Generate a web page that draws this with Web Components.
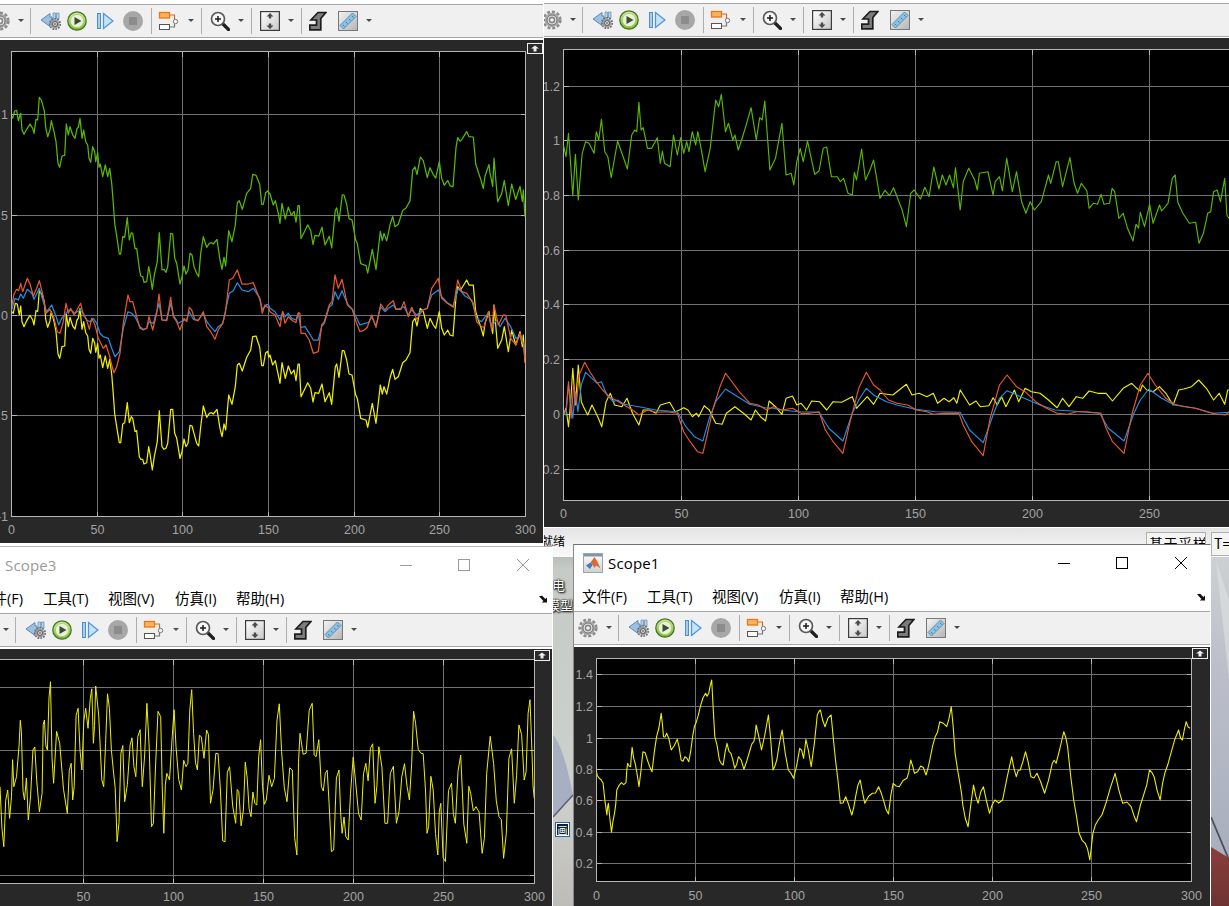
<!DOCTYPE html>
<html lang="zh"><head><meta charset="utf-8"><title>Scopes</title>
<style>
html,body{margin:0;padding:0;width:1229px;height:906px;overflow:hidden;background:#c5c8c5}
</style></head>
<body>
<desk-top>
  <scope-window id="b" style="left:540px;top:0;width:700px;height:557px;--head:3px;--gap:1px">
    <scope-toolbar c="11"></scope-toolbar>
    <scope-plot key="B"></scope-plot>
    <scope-status></scope-status>
  </scope-window>
  <scope-window id="a" style="left:-20px;top:0;width:564px;height:546px;--head:4px;--gap:2px">
    <scope-toolbar c="19"></scope-toolbar>
    <scope-plot key="A"></scope-plot>
  </scope-window>
  <scope-window id="c" style="left:-30px;top:546px;width:583px;height:366px;--gap:2px;--top-w:1px;--top-edge:#b4b4b4;--left-edge:#b4b4b4">
    <scope-title name="Scope3" inactive></scope-title>
    <scope-menu pad="7"></scope-menu>
    <scope-toolbar c="14"></scope-toolbar>
    <scope-plot key="C"></scope-plot>
  </scope-window>
  <scope-window id="d" style="left:573px;top:544px;width:638px;height:366px;--gap:2px;--top-w:1px;--top-edge:#707070;--left-edge:#8a8a8a">
    <scope-title name="Scope1"></scope-title>
    <scope-menu pad="8"></scope-menu>
    <scope-toolbar c="14"></scope-toolbar>
    <scope-plot key="D"></scope-plot>
  </scope-window>
</desk-top>
<script>
const P=(s,ox,sx,oy,sy)=>s.trim().split(/\s+/).map(t=>{const [a,b]=t.split(',').map(Number);return [ox+a/sx,oy+b/sy]});
const Y1="35,125 40,130 46,100 52,102 58,135 62,108 66,155 72,170 80,152 90,136 98,150 102,165 108,122 113,124 118,62 124,70 133,95 137,148 143,172 150,152 154,125 162,155 168,185 174,252 179,265 186,230 194,228 199,132 205,170 210,142 218,168 225,177 231,150 235,145 240,115 246,178 251,155 257,188 263,198 267,238 272,250 278,205 284,220 287,247 293,220 297,265 301,255 308,293 316,258 323,295 329,268 335,312 340,372 344,432 352,482 358,518 362,518 368,462 374,458 382,398 388,458 394,440 398,445 405,484 410,482 418,560 422,568 428,568 432,582 440,578 446,530 450,552 457,600 463,560 472,515 478,422 486,530 492,538 498,535 503,520 512,418 518,418 524,490 530,505 540,565 546,545 552,507 558,530 564,520 570,466 576,468 582,490 590,520 596,528 602,470 610,408 620,442 628,430 635,428 640,432 651,418 660,475 666,500 672,462 677,480 686,375 696,403 706,350 712,285 718,280 727,303 740,262 752,240 758,200 768,198 779,232 785,287 790,287 797,248 803,244 806,262";
const Y2="0,255 8,285 16,272 30,340 36,278 46,325 55,288 64,312 72,300 78,332 84,282 88,282 93,380 103,360 113,338 122,355 129,396 135,368 146,370 156,342 165,395 178,368 185,403 196,290 200,282 207,322 217,242 222,242 230,270 237,312 246,315 257,375 262,385 272,445 288,450 293,472 307,400 318,460 331,345 337,372 342,350 350,372 361,320 368,298 375,328 385,320 398,278 408,270 420,248 428,155 435,145 441,168 451,115 460,125 472,175 480,145 490,165 497,175 508,125 515,175 523,195 533,180 540,195 549,198 558,80 563,50 570,60 575,55 590,30 597,45 610,45 617,125 625,150 632,170 640,198 645,160 657,125 660,150 668,190 672,105 683,235 695,210 703,170 715,245 725,180 737,225 750,185 757,230 760,195 765,275";
const G1="35,200 38,204 44,183 50,181 55,212 62,190 66,240 72,253 80,238 90,222 98,235 102,250 108,208 113,210 118,142 124,150 133,182 137,232 143,260 150,240 154,212 162,245 168,275 174,340 179,352 186,318 194,316 199,222 205,255 210,230 218,255 225,265 231,236 235,232 240,205 246,265 251,240 257,275 263,285 267,325 272,337 278,290 284,305 287,335 293,308 297,352 301,342 308,380 316,345 323,380 329,355 335,400 340,460 344,520 352,570 358,612 362,612 368,560 374,562 382,503 388,570 394,548 398,550 405,596 410,595 418,655 422,678 428,680 432,697 440,695 446,650 450,670 457,718 463,675 472,635 478,548 486,660 492,658 498,667 503,650 512,550 518,552 524,625 530,640 540,702 546,680 552,648 558,672 564,660 570,610 576,615 582,650 590,670 596,680 602,610 610,560 620,592 628,580 635,578 640,582 651,568 660,630 666,658 672,622 677,648 686,542 696,575 706,525 712,458 718,452 727,478 740,430 752,415 758,373 768,376 779,403 785,463 790,463 797,428 803,423 810,432 820,465 826,452 835,490 840,520";
const O1="35,110 42,72 50,58 56,62 62,40 68,65 82,25 90,42 100,78 110,55 118,32 130,80 138,130 150,118 162,145 172,185 180,190 190,155 198,100 205,130 212,115 222,135 232,118 242,100 250,135 260,150 268,178 275,145 285,165 295,205 310,235 318,225 328,255 335,285 342,308 350,290 360,250 370,160 378,110 384,75 390,95 398,95 410,140 420,175 430,180 440,175 447,140 458,180 470,130 477,72 486,150 500,152 512,82 520,140 530,155 540,180 552,145 560,155 568,112 575,120 585,150 595,152 610,125 620,170 632,185 645,208 655,180 668,160 676,130 688,30 698,25 712,0 726,42 745,42 760,38 780,90 787,130 795,105 806,115";
const O2="0,125 15,135 30,170 38,125 45,160 55,140 65,150 78,158 85,128 90,130 93,190 105,190 118,210 130,250 145,245 155,165 163,155 178,105 186,95 195,15 205,55 216,28 225,70 232,105 247,118 258,155 270,185 280,182 292,172 305,135 318,172 332,102 345,120 355,105 370,92 378,118 393,118 402,95 415,140 425,112 440,148 458,120 472,115 485,55 505,25 515,85 532,100 550,112 563,30 575,65 590,70 610,100 620,155 635,170 642,172 655,125 665,180 672,105 685,165 700,135 707,135 722,205 738,225 750,190 762,230 765,280";
const B1="35,120 45,85 55,90 62,72 70,85 82,58 95,70 102,88 118,55 130,95 140,125 155,105 170,145 176,165 185,145 195,135 205,120 215,122 225,130 240,120 250,130 260,150 270,155 280,145 290,160 300,190 310,200 325,205 335,235 345,260 358,245 370,175 384,125 395,130 405,140 420,170 430,178 440,175 447,155 460,160 470,125 477,100 486,150 500,150 512,100 520,135 535,160 552,150 560,150 568,125 580,148 595,150 610,130 620,155 632,170 645,185 655,170 668,160 676,125 688,70 700,62 712,38 726,60 745,65 760,55 780,85 787,118 800,103 806,105";
const B2="0,115 15,125 30,150 38,125 45,140 55,130 65,145 78,150 85,130 92,172 105,170 118,190 130,210 145,210 155,170 163,160 178,110 186,105 195,65 205,88 216,62 225,85 235,105 247,118 258,140 270,165 285,160 295,158 305,140 318,168 332,110 345,125 355,115 370,105 378,118 393,115 402,110 415,135 425,120 440,135 458,120 472,115 485,75 505,60 515,80 532,98 550,108 565,55 585,78 605,90 620,145 635,155 642,145 655,130 665,170 680,150 690,170 705,145 722,170 738,205 750,200 762,225 765,265";
const yR=P(Y2,270,3,270,3);
const A_y=[...P(Y1,0,3,270,3),...yR];
const A_g=[...P(G1,0,3,50,3),...yR.filter(p=>p[0]>281).map(p=>[p[0],p[1]-(161-(p[0]-253)/272*16)])];
const A_o=[...P(O1,0,3,270,3),...P(O2,270,3,270,3)];
const A_b=[...P(B1,0,3,270,3),...P(B2,270,3,270,3)];
const Z11=s=>P(s,560,1568/669,85,3);
const Z12=s=>P(s,0,1568/1200,670,3);
const BG="8,180 14,215 20,145 30,332 36,208 43,345 52,205 60,170 68,175 80,205 85,140 91,165 97,103 105,200 112,215 120,278 135,168 145,205 158,252 168,150 175,135 180,140 185,52 190,135 195,128 205,190 215,190 228,158 235,235 240,198 245,235 258,245 266,150 275,210 283,158 290,205 297,170 302,200 310,140 318,180 323,140 332,200 340,260 352,190 365,45 372,65 378,28 388,140 395,115 405,165 410,150 418,195 428,155 436,122 448,68 460,165 468,98 474,105 480,48 492,255 505,220 520,115 530,270 542,265 548,300 555,230 563,190 570,230 580,168 597,268 607,258 617,190 625,186 636,275 650,275 657,290 665,280 675,325 685,330 690,262 695,285 707,192 716,285 725,260 735,225 750,340 762,316 772,332 782,308 792,342 802,376 812,425 822,325 830,315 845,342 855,307 865,335 876,246 888,312 896,270 905,300 913,270 922,308 927,248 938,375 945,290 958,250 972,285 978,315 983,265 1003,260 1015,330 1020,290 1030,275 1037,318 1047,220 1060,320 1070,260 1082,350 1092,385 1102,350 1112,375 1128,350 1145,270 1150,295 1163,230 1168,230 1178,305 1195,218 1205,295 1213,325 1222,295 1235,318 1240,370 1250,355 1260,358 1268,328 1275,358 1288,355 1294,310 1300,320 1310,400 1320,385 1330,430 1343,468 1350,418 1356,430 1360,382 1370,425 1382,358 1390,415 1405,360 1410,378 1425,355 1435,280 1442,270 1448,352 1460,385 1475,415 1490,412 1498,475 1508,445 1518,385 1525,380 1532,320 1540,315 1548,350 1558,280 1563,390 1568,400";
const BY="8,990 14,970 20,1025 25,950 30,850 36,960 43,840 50,950 55,965 65,990 75,960 90,1000 98,1025 108,950 118,925 128,960 145,965 157,940 170,985 185,1020 195,975 210,975 225,985 235,960 257,952 270,980 280,975 290,968 300,975 310,995 320,985 325,995 338,962 350,975 365,1015 380,1018 390,985 410,965 430,985 448,1005 458,975 470,995 482,1008 490,948 505,965 520,988 530,940 545,933 555,960 565,955 578,975 590,948 608,950 625,975 640,950 660,952 685,935 695,970 720,935 735,958 750,925 780,930 812,898 825,930 842,925 860,935 875,925 885,955 900,940 912,950 923,938 930,955 938,915 960,960 975,948 985,965 1005,962 1015,938 1025,960 1035,935 1045,965 1065,915 1075,950 1090,910 1105,920 1125,925 1145,945 1165,968 1178,940 1193,965 1210,935 1225,940 1240,918 1260,925 1280,925 1295,948 1320,910 1340,895 1350,908 1360,918 1365,900 1375,915 1390,920 1405,905 1420,925 1437,960 1450,915 1462,912 1480,905 1497,885 1515,910 1532,945 1545,925 1558,958 1565,915 1568,915";
const BO="8,985 14,975 20,890 26,1000 32,900 38,960 45,870 58,832 70,860 85,890 100,915 115,935 130,945 150,960 170,975 185,990 205,975 225,982 250,980 275,985 290,1040 305,1070 322,1100 335,1105 345,1050 358,975 375,905 388,865 400,885 420,920 445,955 465,960 485,975 500,965 520,975 545,970 565,985 585,985 607,980 622,1035 640,1070 663,1105 680,1010 700,910 718,862 735,900 750,915 770,945 790,955 815,960 835,975 860,980 875,988 900,985 935,985 945,1020 965,1070 992,1112 1008,1000 1030,900 1048,870 1070,905 1090,920 1115,950 1140,970 1165,985 1190,988 1210,980 1235,980 1268,985 1280,1030 1295,1070 1322,1105 1340,990 1360,900 1378,865 1395,900 1420,940 1440,958 1465,965 1490,970 1515,980 1540,988 1560,990 1568,980";
const BB="8,985 14,990 20,900 30,1000 36,920 42,980 50,900 60,862 75,880 87,895 97,890 110,930 125,950 135,945 150,958 185,965 225,975 275,980 295,1025 315,1055 335,1068 350,1000 365,950 388,912 410,930 445,958 480,968 500,970 520,975 560,980 607,982 630,1030 663,1068 685,985 700,945 718,910 735,930 765,950 790,960 830,972 880,980 938,982 960,1035 992,1073 1015,990 1030,940 1048,917 1080,935 1125,960 1160,975 1200,978 1265,985 1285,1030 1322,1068 1345,985 1360,945 1380,912 1410,940 1440,960 1490,970 1530,985 1568,982";
const CY="0,350 5,530 10,360 15,380 18,350 25,225 28,185 32,390 37,450 43,240 48,330 55,370 58,150 62,240 66,35 70,340 78,220 88,430 93,280 97,350 102,115 107,300 112,115 118,85 122,220 125,48 133,330 138,220 143,115 148,300 153,515 158,250 163,395 170,225 175,290 180,200 186,350 192,100 198,470 203,300 210,140 214,490 218,310 225,200 230,230 237,360 243,290 248,120 253,190 258,300 263,200 270,180 275,400 282,250 288,360 294,515 300,290 308,460 312,365 318,420 323,325 328,440 333,400 338,260 343,350 348,390 355,350 362,150 368,245 375,395 382,300 388,555 392,190 400,250 408,100 413,260 420,350 425,310 430,400 436,540 443,300 447,490 452,500 458,370 465,345 472,450 478,280 484,235 490,400 495,230 503,460 510,310 518,460 525,320 532,350 538,280 543,160 550,250 556,360 560,470 566,360 572,555 576,400 582,575 590,340 595,460 602,255 610,520 615,370 622,410 630,550 636,310 645,280 652,440 658,565 665,265 672,400 678,165 685,330 690,130 695,240 698,385";
const DY="778,290 783,325 788,340 793,435 795,400 799,487 803,430 806,360 812,338 818,338 820,280 824,290 826,232 830,280 835,350 840,245 846,270 852,305 858,200 864,130 867,200 871,190 877,240 885,208 890,270 895,260 900,275 905,200 910,155 915,110 922,70 926,70 930,30 934,200 940,270 945,285 950,220 955,250 960,295 965,260 972,298 980,240 985,215 988,165 995,240 1004,135 1010,300 1015,270 1022,180 1030,300 1037,325 1045,235 1050,265 1053,208 1060,290 1068,135 1072,120 1078,170 1086,135 1092,275 1098,400 1105,380 1113,435 1118,380 1124,330 1130,400 1140,370 1148,350 1155,395 1161,432 1167,340 1175,350 1185,325 1190,270 1195,310 1203,288 1210,315 1215,270 1222,200 1228,155 1237,170 1243,110 1248,250 1255,350 1258,405 1265,470 1272,345 1278,400 1285,350 1293,430 1300,390 1310,390 1322,260 1328,320 1333,300 1340,245 1347,320 1355,310 1365,370 1375,280 1380,280 1390,185 1395,230 1403,390 1410,490 1418,520 1424,570 1428,490 1435,450 1445,400 1457,310 1467,400 1478,410 1485,455 1495,370 1502,300 1508,320 1516,390 1522,310 1530,250 1540,180 1545,210 1550,155 1555,175";
const jitter=(pts,base,range,parts)=>{const o=[];pts.forEach((p,i)=>{o.push(p);const n=pts[i+1];if(n)for(let k=1;k<parts;k++){const f=k/parts,s=(i+k)%2?1:-1;o.push([p[0]+(n[0]-p[0])*f,p[1]+(n[1]-p[1])*f+s*(base+(i*7+k*5)%range)])}});return o};
const GREEN='#58ba00',YEL='#efef00',ORG='#e8582a',BLU='#1c90ea';
const PLOTS={
 A:{vb:[-19,40,562,503],box:[11,51,525,516],lw:1.25,
  xt:[[11,'0'],[97,'50'],[182,'100'],[268,'150'],[354,'200'],[439,'250'],[525,'300']],
  yt:[[114,'1'],[215,'0.5'],[315,'0'],[415,'-0.5'],[516,'-1']],labelx:8,xly:529,
  btn:[527,43],traces:[[GREEN,A_g],[YEL,A_y],[BLU,A_b],[ORG,A_o]]},
 B:{vb:[541,38,698,489],box:[563,49,1300,500],lw:1.15,
  xt:[[563,'0'],[681,'50'],[798,'100'],[915,'150'],[1032,'200'],[1149,'250'],[1266,'']],
  yt:[[86,'1.2'],[140,'1'],[195,'0.8'],[250,'0.6'],[304,'0.4'],[359,'0.2'],[414,'0'],[469,'-0.2']],labelx:560,xly:513,
  traces:[[GREEN,Z11(BG)],[YEL,Z11(BY)],[BLU,Z11(BB)],[ORG,Z11(BO)]]},
 C:{vb:[-29,649,581,262],box:[-7,659,534,883],lw:1,
  xt:[[83,'50'],[173,'100'],[263,'150'],[353,'200'],[443,'250'],[534,'300']],
  yt:[[687,''],[750,''],[813,''],[875,'']],labelx:-12,xly:896,
  btn:[534,650],traces:[[YEL,jitter(Z12(CY),6,28,2)]]},
 D:{vb:[574,647,636,262],box:[596,658,1191,881],lw:1.1,
  xt:[[596,'0'],[695,'50'],[794,'100'],[893,'150'],[992,'200'],[1091,'250'],[1191,'300']],
  yt:[[674,'1.4'],[706,'1.2'],[738,'1'],[769,'0.8'],[800,'0.6'],[832,'0.4'],[863,'0.2']],labelx:593,xly:895,
  btn:[1192,648],traces:[[YEL,jitter(Z12(DY),1,3,2)]]}
};
const FONT_UI='"Open Sans","Noto Sans CJK SC",sans-serif';
const ICONS={
 gear:[20,20,`<circle cx="10" cy="10" r="8.3" fill="none" stroke="#8c8c8c" stroke-width="2.6" stroke-dasharray="3 1.85"/><circle cx="10" cy="10" r="7.2" fill="#a6a6a6"/><circle cx="10" cy="10" r="5" fill="#f2f2f2" stroke="#6e6e6e"/><circle cx="10" cy="10" r="2.6" fill="#f4f4f4" stroke="#858585" stroke-width="1.6"/>`],
 back:[22,20,`<path d="M1 9 10 2.5V6H12V12H10V15.500Z" fill="#9cc0e2" stroke="#5d8cb4"/><path d="M13 2h2.500v6H13zM16.500 2H19v6h-2.500z" fill="#b7d1ea" stroke="#6a94b8" stroke-width=".8"/><circle cx="15" cy="13" r="5.200" fill="none" stroke="#707070" stroke-width="1.800" stroke-dasharray="1.800 1.100"/><circle cx="15" cy="13" r="4.400" fill="#9b9b9b"/><circle cx="15" cy="13" r="2.400" fill="#eee" stroke="#555"/><circle cx="15" cy="13" r=".9" fill="#666"/>`],
 play:[20,20,`<circle cx="10" cy="10" r="9.200" fill="url(#gp)" stroke="#47752a" stroke-width="1.300"/><circle cx="10" cy="10" r="6.600" fill="#e8f2d8" stroke="#a7cf6c" stroke-width=".8"/><path d="M7.500 6 14.500 10 7.500 14Z" fill="#3f4a34"/>`],
 step:[18,18,`<rect x="1.500" y="1.500" width="3" height="15" fill="#a7cdee" stroke="#4f8ec6"/><path d="M7.500 1.500 17 9 7.500 16.500Z" fill="#c5e2f8" stroke="#4d95d6" stroke-width="1.200"/>`],
 stop:[20,20,`<circle cx="10" cy="10" r="10" fill="#a7a7a7"/><rect x="6" y="6" width="8" height="8" rx=".5" fill="#8c8c8c"/>`],
 block:[22,20,`<path d="M13 4H17.500V8.500" fill="none" stroke="#d2691e" stroke-width="1.200"/><path d="M13 16H17.500V12.500" fill="none" stroke="#777" stroke-width="1.200"/><rect x="2.500" y="1.500" width="10" height="5.500" fill="#f9b45b" stroke="#e9761c" stroke-width="1.300"/><rect x="2.500" y="13.500" width="10" height="5" fill="#fdfdfd" stroke="#555"/><circle cx="18.500" cy="10.500" r="2.200" fill="#f4f4f4" stroke="#777"/>`],
 zoom:[20,20,`<path d="M13 13 18.500 18.500" stroke="#1f1f1f" stroke-width="3.200" stroke-linecap="round"/><circle cx="8" cy="8" r="6.500" fill="#f7f7f7" stroke="#5a5a5a" stroke-width="1.700"/><path d="M5 8H11M8 5V11" stroke="#1a1a1a" stroke-width="1.500"/>`],
 fit:[20,20,`<rect x=".6" y=".6" width="18.800" height="18.800" fill="url(#gf)" stroke="#3c3c3c" stroke-width="1.200"/><path d="M10 2 6.500 5.500H8.800V7.500H11.200V5.500H13.500ZM10 18 6.500 14.500H8.800V12.500H11.200V14.500H13.500Z" fill="#4a4a4a"/>`],
 signal:[18,20,`<path d="M.8 18.800V14.200H7.500V9H1.800L9 1.500H16.800L11.800 7.500V18.800Z" fill="#7c7c7c" stroke="#1c1c1c" stroke-width="1.700" stroke-linejoin="miter"/>`],
 ruler:[20,20,`<rect x=".5" y=".5" width="19" height="19" fill="url(#gr)" stroke="#777"/><path d="M2 14.500 14.500 2 18 5.500 5.500 18Z" fill="#8ac2e6" stroke="#5a8fb6"/><path d="M5 14 6.500 15.500M8 11 9.500 12.500M11 8 12.500 9.500M14 5 15.500 6.500" stroke="#2f6f9f" stroke-width=".9"/>`]
};
const icon=(n)=>{const [w,h,b]=ICONS[n];return `<svg width="${w}" height="${h}" viewBox="0 0 ${w} ${h}" aria-hidden="true"><defs><linearGradient id="gp" x1="0" y1="0" x2="0" y2="1"><stop offset="0" stop-color="#d2ec9a"/><stop offset="1" stop-color="#76b928"/></linearGradient><linearGradient id="gf" x1="0" y1="0" x2="1" y2="1"><stop offset="0" stop-color="#fff"/><stop offset="1" stop-color="#c8c8c8"/></linearGradient><linearGradient id="gr" x1="0" y1="0" x2="1" y2="1"><stop offset="0" stop-color="#f4f4f4"/><stop offset="1" stop-color="#b4b4b4"/></linearGradient></defs>${b}</svg>`};
const TOOLS=[['gear',0],['caret',21],['sep',30.5],['back',51],['play',77],['step',105],['stop',133],['sep',151.5],['block',168],['caret',191],['sep',201.5],['zoom',220],['caret',241],['sep',251.5],['fit',270],['caret',291],['sep',301.5],['signal',318],['ruler',348],['caret',369]];

class DeskTop extends HTMLElement{
 constructor(){super();this.attachShadow({mode:'open'}).innerHTML=`<style>
 :host{display:block;position:relative;width:1229px;height:906px;overflow:hidden;font-family:"Noto Sans CJK SC",sans-serif}
 .wall{display:block;position:absolute;left:0;top:0}
 .lab{position:absolute;font-size:13px;line-height:15px;color:#fff;text-shadow:0 0 2px #000,1px 1px 2px #000,0 0 1px #000;white-space:nowrap}
 .ic{position:absolute;left:556px;top:823px;width:13px;height:13px;box-sizing:border-box;background:#123;color:#fff;border:1px solid #fff;outline:1px solid #26a;font-size:10px;line-height:11px;text-align:center}
 </style>
 <svg class="wall" width="1229" height="906" viewBox="0 0 1229 906"><defs>
 <linearGradient id="m" x1="0" y1="0" x2="0" y2="1"><stop offset="0" stop-color="#a9aca8"/><stop offset=".08" stop-color="#c6cbc7"/><stop offset="1" stop-color="#cfd3cf"/></linearGradient>
 <linearGradient id="l" x1="0" y1="0" x2="0" y2="1"><stop offset="0" stop-color="#cfcfcd"/><stop offset="1" stop-color="#bdbcb8"/></linearGradient>
 <linearGradient id="r" x1="0" y1="0" x2="0" y2="1"><stop offset="0" stop-color="#cfd3d2"/><stop offset=".35" stop-color="#bcbfca"/><stop offset="1" stop-color="#a4aabb"/></linearGradient>
 <linearGradient id="rd" x1="0" y1="0" x2="0" y2="1"><stop offset="0" stop-color="#8a3e3c"/><stop offset="1" stop-color="#6e3331"/></linearGradient></defs>
 <rect x="540" y="540" width="40" height="366" fill="url(#m)"/>
 <path d="M553 735C562 745 568 770 573 795L553 818Z" fill="#a8afc2"/>
 <path d="M553 818 573 796V906H553Z" fill="url(#l)"/>
 <path d="M553 817 573 795" stroke="#59606a" stroke-width="1.500"/>
 <rect x="1205" y="540" width="24" height="366" fill="url(#r)"/>
 <path d="M1216 560 1229 680V600Z" fill="#dfe2e4" opacity=".6"/>
 <path d="M1211 817 1229 860" stroke="#4a4f5c" stroke-width="1.800"/>
 <path d="M1211 847 1229 858V906H1211Z" fill="url(#rd)"/>
 </svg>
 <div class="lab" style="left:552px;top:577px">电</div>
 <div class="lab" style="left:547px;top:597px">模型</div>
 <div class="ic">画</div>
 <slot></slot>`}
}
class ScopeWindow extends HTMLElement{
 constructor(){super();this.attachShadow({mode:'open'}).innerHTML=`<style>
 :host{position:absolute;display:flex;flex-direction:column;box-sizing:border-box;background:#fff;overflow:hidden;
 border-top:var(--top-w,0px) solid var(--top-edge,transparent);border-left:1px solid var(--left-edge,#fff);border-right:1px solid #fff}
 .head{flex:none;height:var(--head,0);background:#fff}
 </style><div class="head"></div><slot></slot>`}
}
class ScopeTitle extends HTMLElement{
 constructor(){super();const off=this.hasAttribute('inactive');const c=off?'#9a9a9a':'#000';const n=this.getAttribute('name')||'';
 this.attachShadow({mode:'open'}).innerHTML=`<style>
 :host{display:flex;flex:none;height:35px;align-items:center;background:#fff;box-sizing:border-box;padding:0 0 0 9px;position:relative;font:15px ${FONT_UI};color:${c}}
 .t{margin-left:5px;line-height:20px;letter-spacing:.15px}
 .sp{flex:1}
 .b{display:block;flex:none}
 </style>
 <svg class="b" width="20" height="20" viewBox="0 0 20 20" style="margin-top:1px" aria-hidden="true"><defs><linearGradient id="tg" x1="0" y1="0" x2="0" y2="1"><stop offset="0" stop-color="#fff"/><stop offset="1" stop-color="#cfcfcf"/></linearGradient></defs><rect x=".5" y=".5" width="19" height="19" fill="url(#tg)" stroke="#9aa5ad"/><rect x="1" y="1" width="18" height="2.500" fill="#7f97ad"/><path d="M3 12.500 7.500 9.500 10 11.500 7 16Z" fill="#3f7fc0"/><path d="M7.500 9.500 11.500 4 15 11 17.500 15.500 13.500 12.500 11 15 10 11.500Z" fill="#e0662a"/><path d="M11.500 4 15 11 17.500 15.500 14 8Z" fill="#a8341c"/></svg>
 <span class="t">${n}</span><span class="sp"></span>
 <svg class="b" width="14" height="14" viewBox="0 0 14 14" aria-hidden="true" style="margin-right:44px"><path d="M1 7.500H13" stroke="${c}"/></svg>
 <svg class="b" width="14" height="14" viewBox="0 0 14 14" aria-hidden="true" style="margin-right:45px"><rect x="1.500" y="1.500" width="11" height="11" fill="none" stroke="${c}"/></svg>
 <svg class="b" width="14" height="14" viewBox="0 0 14 14" aria-hidden="true" style="margin-right:22px"><path d="M1 1 13 13M13 1 1 13" stroke="${c}"/></svg>`}
}
class ScopeMenu extends HTMLElement{
 constructor(){super();const pad=this.getAttribute('pad')||'8';
 const items=[['文件(F)',48],['工具(T)',48],['视图(V)',50],['仿真(I)',44],['帮助(H)',52]];
 this.attachShadow({mode:'open'}).innerHTML=`<style>
 :host{display:flex;flex:none;height:31px;align-items:center;background:#fff;box-sizing:border-box;padding:3px 0 0 ${pad}px;font:14.5px/20px ${FONT_UI};color:#000;gap:17px;white-space:nowrap}
 span{flex:none;display:block}
 svg{margin-left:auto;margin-right:4px;flex:none}
 </style>${items.map(([t,w])=>`<span style="width:${w}px">${t}</span>`).join('')}
 <svg width="10" height="8" viewBox="0 0 12 10" aria-hidden="true"><path d="M1 1.500 5 1 9 5 11 3V9.500H4.500L6.500 7.500Z" fill="#111"/></svg>`}
}
class ScopeToolbar extends HTMLElement{
 constructor(){super();const c=+this.getAttribute('c')||0;let x=-c,h='';
 for(const [n,cx] of TOOLS){
  const w=n==='caret'?8:n==='sep'?1:ICONS[n][0];
  const l=cx-w/2,m=l-x;x=l+w;
  if(n==='caret')h+=`<svg style="margin-left:${m}px;flex:none" width="8" height="4" viewBox="0 0 8 4" aria-hidden="true"><path d="M1 0H7L4 3Z" fill="#4a4a4a"/></svg>`;
  else if(n==='sep')h+=`<i style="margin-left:${m}px"></i>`;
  else h+=`<span style="margin-left:${m}px">${icon(n)}</span>`;
 }
 this.attachShadow({mode:'open'}).innerHTML=`<style>
 :host{display:flex;flex:none;height:34px;box-sizing:border-box;align-items:center;background:#f0f0f0;border-top:1px solid #a6a6a6;border-bottom:1px solid #a6a6a6;margin-bottom:var(--gap,2px);overflow:hidden}
 span{display:flex;flex:none}i{display:block;flex:none;width:1px;height:26px;background:#aeaeae}
 </style>${h}`}
}
class ScopePlot extends HTMLElement{
 constructor(){super();const o=PLOTS[this.getAttribute('key')];const [vx,vy,vw,vh]=o.vb;const [x0,y0,x1,y1]=o.box;
 const a=v=>Math.floor(v)+.5;let g='',t='',lab='';
 const X0=a(x0),X1=a(x1),Y0=a(y0),Y1_=a(y1);
 for(const [x,l] of o.xt){const p=a(x);
  if(p>X0&&p<X1){g+=`<path d="M${p} ${Y0}V${Y1_}"/>`;t+=`<path d="M${p} ${Y0}v5M${p} ${Y1_}v-5"/>`}
  if(l)lab+=`<text x="${x+.5}" y="${o.xly+4.5}" text-anchor="middle">${l}</text>`}
 for(const [y,l] of o.yt){const p=a(y);
  if(p>Y0&&p<Y1_){g+=`<path d="M${X0} ${p}H${X1}"/>`;t+=`<path d="M${X0} ${p}h5M${X1} ${p}h-5"/>`}
  if(l)lab+=`<text x="${o.labelx}" y="${y+5}" text-anchor="end">${l}</text>`}
 const tr=o.traces.map(([c,pts])=>`<polyline fill="none" stroke="${c}" stroke-width="${o.lw}" stroke-linejoin="round" points="${pts.map(p=>p[0].toFixed(1)+','+p[1].toFixed(1)).join(' ')}"/>`).join('');
 const btn=o.btn?`<g transform="translate(${o.btn[0]} ${o.btn[1]})"><rect x=".5" y=".5" width="15" height="10" fill="#2b2b2b" stroke="#eee"/><path d="M4 5.500 8 2.500 12 5.500H9.500V8.500H6.500V5.500Z" fill="#eee"/></g>`:'';
 this.attachShadow({mode:'open'}).innerHTML=`<style>
 :host{display:block;flex:none;width:${vw}px;height:${vh}px;background:#282828;overflow:hidden}
 svg{display:block}
 text{font:12.5px "Liberation Sans",Arial,sans-serif;fill:#a3a3a3}
 .g path{stroke:#727272;stroke-width:1;fill:none}
 .t path{stroke:#b4b4b4;stroke-width:1;fill:none}
 </style>
 <svg width="${vw}" height="${vh}" viewBox="${vx} ${vy} ${vw} ${vh}"><defs><clipPath id="cp"><rect x="${X0}" y="${Y0}" width="${X1-X0}" height="${Y1_-Y0}"/></clipPath></defs>
 <rect x="${X0}" y="${Y0}" width="${X1-X0}" height="${Y1_-Y0}" fill="#000"/>
 <g class="g" shape-rendering="crispEdges">${g}</g>
 <g class="t" shape-rendering="crispEdges">${t}<rect x="${X0}" y="${Y0}" width="${X1-X0}" height="${Y1_-Y0}" style="stroke:#b4b4b4;fill:none"/></g>
 <g clip-path="url(#cp)">${tr}</g>${lab}${btn}</svg>`}
}
class ScopeStatus extends HTMLElement{
 constructor(){super();this.attachShadow({mode:'open'}).innerHTML=`<style>
 :host{display:flex;flex:none;height:30px;box-sizing:border-box;align-items:flex-start;border-top:1px solid #fff;background:linear-gradient(#e4e4e4,#fafafa);font:14px/20px "Noto Sans CJK SC",sans-serif;color:#000;padding-top:4px}
 .m{flex:1;font-size:12px;margin-top:-1px}
 .c{flex:none;box-sizing:border-box;height:24px;border:1px solid #b0b0b0;padding:0 0 0 2px;white-space:nowrap;overflow:hidden;background:#f4f4f4}
 b{font-weight:400;color:#e8860c}
 </style><span class="m">就绪</span><span class="c" style="width:60px;margin-right:5px;letter-spacing:.6px">基于采样</span><span class="c" style="width:28px">T=<b>0</b></span>`}
}
customElements.define('desk-top',DeskTop);
customElements.define('scope-window',ScopeWindow);
customElements.define('scope-title',ScopeTitle);
customElements.define('scope-menu',ScopeMenu);
customElements.define('scope-toolbar',ScopeToolbar);
customElements.define('scope-plot',ScopePlot);
customElements.define('scope-status',ScopeStatus);
</script>
</body></html>
